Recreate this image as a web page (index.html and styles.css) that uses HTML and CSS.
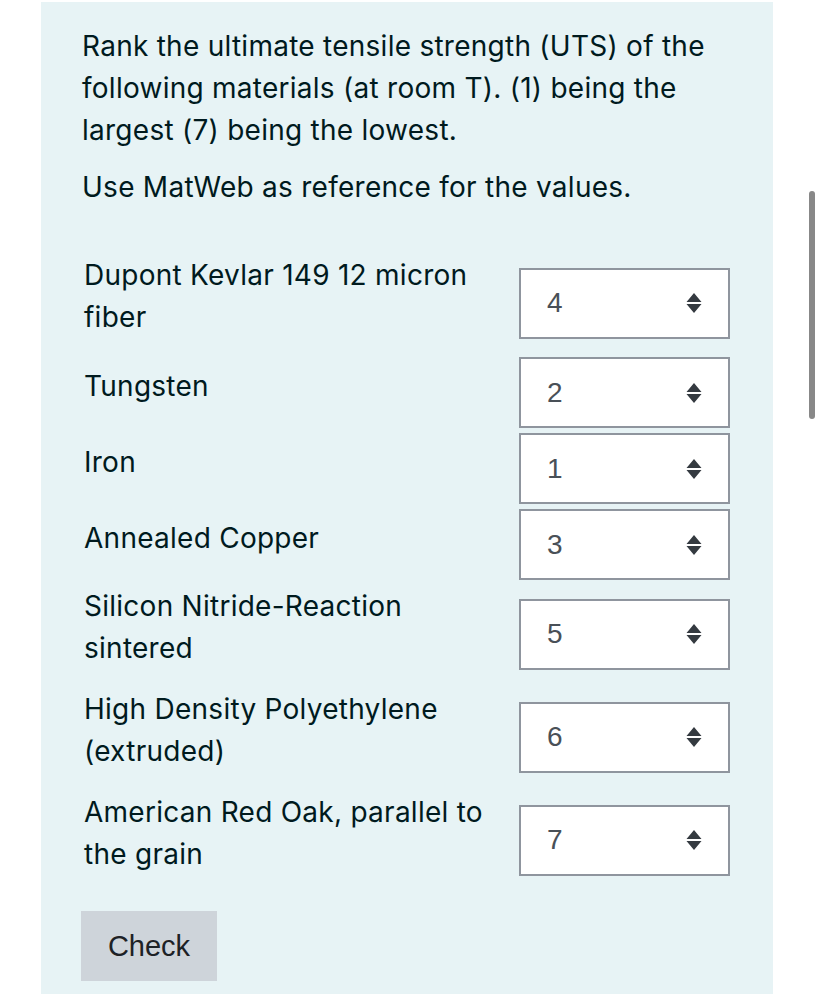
FILE: index.html
```html
<!DOCTYPE html>
<html lang="en">
<head>
    <meta charset="UTF-8">
    <meta name="viewport" content="width=device-width, initial-scale=1.0">
    <title>Question</title>
    <link rel="stylesheet" href="styles.css">
</head>
<body>
    <div class="formulation">
        <p>Rank the ultimate tensile strength (UTS) of the following materials (at room T). (1) being the largest (7) being the lowest.</p>
        <p>Use MatWeb as reference for the values.</p>

        <!-- Liste des matériaux avec leur rang -->
        <div class="answer">
            <div class="row">
                <div class="text">Dupont Kevlar 149 12 micron fiber</div>
                <div class="control">
                    <span class="value">4</span>
                    <svg class="arrows" width="16" height="20" viewBox="0 0 16 20"><path d="M8 0 L15.5 9 H0.5 Z M0.5 11 H15.5 L8 20 Z" fill="#343a40"/></svg>
                </div>
            </div>
            <div class="row">
                <div class="text">Tungsten</div>
                <div class="control">
                    <span class="value">2</span>
                    <svg class="arrows" width="16" height="20" viewBox="0 0 16 20"><path d="M8 0 L15.5 9 H0.5 Z M0.5 11 H15.5 L8 20 Z" fill="#343a40"/></svg>
                </div>
            </div>
            <div class="row">
                <div class="text">Iron</div>
                <div class="control">
                    <span class="value">1</span>
                    <svg class="arrows" width="16" height="20" viewBox="0 0 16 20"><path d="M8 0 L15.5 9 H0.5 Z M0.5 11 H15.5 L8 20 Z" fill="#343a40"/></svg>
                </div>
            </div>
            <div class="row">
                <div class="text">Annealed Copper</div>
                <div class="control">
                    <span class="value">3</span>
                    <svg class="arrows" width="16" height="20" viewBox="0 0 16 20"><path d="M8 0 L15.5 9 H0.5 Z M0.5 11 H15.5 L8 20 Z" fill="#343a40"/></svg>
                </div>
            </div>
            <div class="row">
                <div class="text">Silicon Nitride-Reaction sintered</div>
                <div class="control">
                    <span class="value">5</span>
                    <svg class="arrows" width="16" height="20" viewBox="0 0 16 20"><path d="M8 0 L15.5 9 H0.5 Z M0.5 11 H15.5 L8 20 Z" fill="#343a40"/></svg>
                </div>
            </div>
            <div class="row">
                <div class="text">High Density Polyethylene (extruded)</div>
                <div class="control">
                    <span class="value">6</span>
                    <svg class="arrows" width="16" height="20" viewBox="0 0 16 20"><path d="M8 0 L15.5 9 H0.5 Z M0.5 11 H15.5 L8 20 Z" fill="#343a40"/></svg>
                </div>
            </div>
            <div class="row">
                <div class="text">American Red Oak, parallel to the grain</div>
                <div class="control">
                    <span class="value">7</span>
                    <svg class="arrows" width="16" height="20" viewBox="0 0 16 20"><path d="M8 0 L15.5 9 H0.5 Z M0.5 11 H15.5 L8 20 Z" fill="#343a40"/></svg>
                </div>
            </div>
        </div>

        <button class="btn-check">Check</button>
    </div>

    <div class="scrollbar"></div>
</body>
</html>
```

FILE: styles.css
```css
body {
    margin: 0;
    padding: 0;
    background-color: #fff;
    font-family: Inter, "Open Sans", sans-serif;
    color: #001a1e;
    overflow: hidden;
}
.formulation {
    margin: 2px 0 0 41px;
    width: 732px;
    min-height: 1000px;
    box-sizing: border-box;
    padding: 23px 41px 0 41px;
    background-color: #e7f3f5;
}
p {
    margin: 0 0 15px 0;
    font-size: 28px;
    line-height: 42px;
    letter-spacing: 0.26px;
}
.answer {
    margin-top: 46px;
    display: flex;
    flex-direction: column;
    gap: 5px;
}
.row {
    display: flex;
    align-items: center;
}
.text {
    width: 420px;
    padding: 0 15px 14px 2px;
    font-size: 28px;
    line-height: 42px;
    letter-spacing: 0.26px;
}
.control {
    width: 211px;
    height: 71px;
    box-sizing: border-box;
    border: 2px solid #8f959e;
    background-color: #fff;
    display: flex;
    align-items: center;
    justify-content: space-between;
    padding: 0 26px 0 26px;
    font-family: "Liberation Sans", Arial, sans-serif;
    font-size: 28px;
    color: #495057;
}
.btn-check {
    margin: 22px 0 0 -1px;
    width: 136px;
    height: 70px;
    border: none;
    background-color: #ced4da;
    color: #1d2125;
    font-family: "Liberation Sans", Arial, sans-serif;
    font-size: 29px;
    padding: 0;
}
.scrollbar {
    position: fixed;
    left: 809px;
    top: 191px;
    width: 6px;
    height: 228px;
    border-radius: 3px;
    background-color: #888;
}
```
